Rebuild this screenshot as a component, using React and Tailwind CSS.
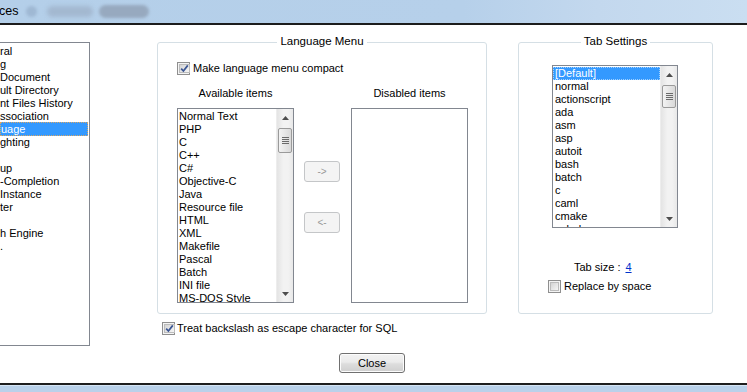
import React from "react";

const categories = [
  "ral",
  "g",
  "Document",
  "ult Directory",
  "nt Files History",
  "ssociation",
  "uage",
  "ghting",
  "",
  "up",
  "-Completion",
  "Instance",
  "ter",
  "",
  "h Engine",
  ".",
];

const languages = [
  "Normal Text",
  "PHP",
  "C",
  "C++",
  "C#",
  "Objective-C",
  "Java",
  "Resource file",
  "HTML",
  "XML",
  "Makefile",
  "Pascal",
  "Batch",
  "INI file",
  "MS-DOS Style",
];

const tabLangs = [
  "[Default]",
  "normal",
  "actionscript",
  "ada",
  "asm",
  "asp",
  "autoit",
  "bash",
  "batch",
  "c",
  "caml",
  "cmake",
  "cobol",
];

// win7 style checkbox
function Check({ checked }) {
  return (
    <span className="w-[13px] h-[13px] shrink-0 border border-[#8f8f8f] bg-[#f4f4f4] flex">
      <span className="flex-1 m-[1px] border border-[#bcbcbc] bg-[linear-gradient(135deg,#d4d4d4,#f6f6f6)] flex items-center justify-center">
        {checked && (
          <svg width="9" height="9" viewBox="0 0 9 9">
            <path d="M1.2 4.6 L3.4 7 L7.8 1.4" fill="none" stroke="#3a5593" strokeWidth="1.7" />
          </svg>
        )}
      </span>
    </span>
  );
}

function Arrow({ down }) {
  return (
    <svg width="7" height="4" viewBox="0 0 7 4">
      <path d={down ? "M0 0 L7 0 L3.5 4 Z" : "M3.5 0 L7 4 L0 4 Z"} fill="#4d4d4d" />
    </svg>
  );
}

function ScrollBar({ thumbTop, thumbH }) {
  return (
    <div className="w-[17px] h-full flex flex-col bg-[linear-gradient(90deg,#e4e4e4,#f2f2f2_40%,#f2f2f2_70%,#e8e8e8)] border-l border-[#ededed]">
      <div className="h-[17px] flex items-center justify-center">
        <Arrow />
      </div>
      <div className="flex-1 relative">
        <div
          className="absolute left-[1px] right-[1px] rounded-[2px] border border-[#9a9a9a] bg-[linear-gradient(90deg,#f3f3f3,#e6e6e6_50%,#d9d9d9)] flex flex-col items-center justify-center gap-[1px]"
          style={{ top: thumbTop, height: thumbH }}
        >
          <span className="w-[7px] h-[1px] bg-[#6a6a6a]" />
          <span className="w-[7px] h-[1px] bg-[#6a6a6a]" />
          <span className="w-[7px] h-[1px] bg-[#6a6a6a]" />
          <span className="w-[7px] h-[1px] bg-[#6a6a6a]" />
        </div>
      </div>
      <div className="h-[17px] flex items-center justify-center">
        <Arrow down />
      </div>
    </div>
  );
}

function GroupBox({ title, className, children }) {
  return (
    <div className={"relative border border-[#d5dfe5] rounded-[3px] " + className}>
      <div className="absolute left-0 right-0 -top-[8px] flex justify-center">
        <span className="bg-white px-[3px] leading-[13px] text-[11.5px] text-black">{title}</span>
      </div>
      {children}
    </div>
  );
}

function DisabledButton({ label }) {
  return (
    <div className="w-[36px] h-[21px] rounded-[3px] border border-[#c4c6c8] bg-[#f4f4f4] flex items-center justify-center text-[#9a9a9a] text-[10px]">
      {label}
    </div>
  );
}

export default function App() {
  return (
    <div className="w-[747px] h-[392px] overflow-hidden bg-white flex flex-col font-['Liberation_Sans',Arial,sans-serif] text-[11px] text-black">
      {/* Title bar */}
      <div className="h-[23px] shrink-0 flex items-center bg-[linear-gradient(90deg,#b4cfe9_0%,#b6d0ea_62%,#c3d8ee_80%,#cadef1_100%)]">
        <span className="text-[12.5px] leading-none -ml-[1px]">ces</span>
        <span className="ml-[8px] w-[11px] h-[11px] rounded-full bg-[#9fb8d3] blur-[1.5px]" />
        <span className="ml-[10px] w-[46px] h-[11px] rounded-full bg-[#a3b8d0] blur-[2px]" />
        <span className="ml-[6px] w-[50px] h-[13px] rounded-full bg-[#97a9bf] blur-[1.5px]" />
      </div>
      <div className="h-[2px] shrink-0 bg-[#1c1c1c]" />

      {/* Body */}
      <div className="flex-1 flex items-start">
        {/* Category list */}
        <div className="mt-[17px] w-[90px] h-[304px] border-t border-r border-b border-[#828790] pt-[2px]">
          {categories.map((c, i) =>
            c === "uage" ? (
              <div
                key={i}
                className="h-[13px] leading-[13px] mr-[1px] bg-[#3399ff] text-white border border-dotted border-[#d9a766] -mt-[1px] h-[14px]"
              >
                {c}
              </div>
            ) : (
              <div key={i} className="h-[13px] leading-[13px] whitespace-nowrap">
                {c}
              </div>
            )
          )}
        </div>

        {/* Main area */}
        <div className="ml-[67px] mt-[17px] flex flex-col">
          <div className="flex gap-[31px]">
            {/* Language Menu */}
            <GroupBox title="Language Menu" className="w-[330px] h-[272px]">
              <div className="pl-[19px] pt-[19px] flex flex-col">
                <div className="flex items-center gap-[3px] h-[13px]">
                  <Check checked />
                  <span>Make language menu compact</span>
                </div>
                <div className="flex mt-[12px] h-[13px] leading-[13px]">
                  <span className="w-[117px] text-center">Available items</span>
                  <span className="w-[57px]" />
                  <span className="w-[117px] text-center">Disabled items</span>
                </div>
                <div className="flex items-start mt-[8px]">
                  <div className="w-[117px] h-[195px] border border-[#828790] flex overflow-hidden">
                    <div className="flex-1 pt-[1px] pl-[1px] overflow-hidden">
                      {languages.map((l) => (
                        <div key={l} className="h-[13px] leading-[13px] whitespace-nowrap">
                          {l}
                        </div>
                      ))}
                    </div>
                    <ScrollBar thumbTop={2} thumbH={25} />
                  </div>
                  <div className="ml-[10px] pt-[53px] flex flex-col gap-[30px]">
                    <DisabledButton label="->" />
                    <DisabledButton label="<-" />
                  </div>
                  <div className="ml-[11px] w-[117px] h-[195px] border border-[#828790]" />
                </div>
              </div>
            </GroupBox>

            {/* Tab Settings */}
            <GroupBox title="Tab Settings" className="w-[195px] h-[272px]">
              <div className="flex flex-col">
                <div className="ml-[33px] mt-[22px] w-[126px] h-[163px] border border-[#828790] flex overflow-hidden">
                  <div className="flex-1 pt-[1px] overflow-hidden">
                    {tabLangs.map((l, i) =>
                      i === 0 ? (
                        <div
                          key={l}
                          className="h-[13px] leading-[11px] pl-[1px] bg-[#3399ff] text-white border border-dotted border-[#9fd0ff]"
                        >
                          {l}
                        </div>
                      ) : (
                        <div key={l} className="h-[13px] leading-[13px] pl-[2px] whitespace-nowrap">
                          {l}
                        </div>
                      )
                    )}
                  </div>
                  <ScrollBar thumbTop={2} thumbH={23} />
                </div>
                <div className="ml-[55px] mt-[33px] h-[13px] leading-[13px] flex">
                  <span>Tab size :</span>
                  <span className="ml-[5px] text-[#0033cc] underline">4</span>
                </div>
                <div className="ml-[29px] mt-[6px] flex items-center gap-[3px] h-[13px]">
                  <Check />
                  <span>Replace by space</span>
                </div>
              </div>
            </GroupBox>
          </div>

          <div className="mt-[8px] ml-[5px] flex items-center gap-[2px] h-[13px]">
            <Check checked />
            <span>Treat backslash as escape character for SQL</span>
          </div>

          <div className="mt-[18px] ml-[182px] w-[66px] h-[20px] rounded-[3px] border border-[#707070] bg-[linear-gradient(180deg,#f2f2f2_0%,#ebebeb_45%,#dddddd_55%,#cfcfcf_100%)] flex items-center justify-center shadow-[inset_0_0_0_1px_#fcfcfc]">
            Close
          </div>
        </div>
      </div>

      {/* bottom frame */}
      <div className="h-[2px] shrink-0 bg-[#1e1e1e]" />
      <div className="h-[7px] shrink-0 bg-[#b9d1ea] border-t border-[#d6e5f4]" />
    </div>
  );
}
